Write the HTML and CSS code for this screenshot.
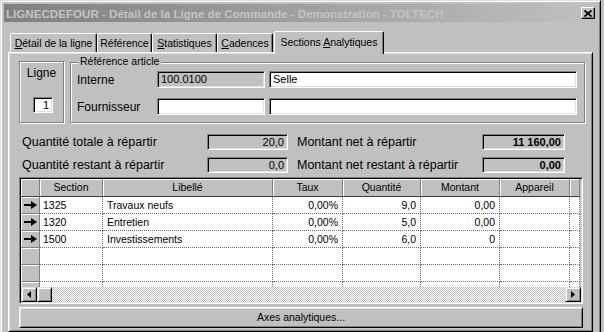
FILE: index.html
```html
<!DOCTYPE html>
<html lang="fr">
<head>
<meta charset="utf-8">
<title>LIGNECDEFOUR</title>
<link rel="stylesheet" href="styles.css">
</head>
<body>
<div class="window">
  <div class="titlebar">
    <span class="title">LIGNECDEFOUR - Détail de la Ligne de Commande - Demonstration - TOLTECH</span>
    <div class="close"><svg width="8" height="7" viewBox="0 0 8 7"><path d="M0.5 0.5 L7.5 6.5 M7.5 0.5 L0.5 6.5" stroke="#000" stroke-width="1.7" fill="none"/></svg></div>
  </div>
  <div class="client">
    <div class="tabs">
      <div class="tab tab-detail"><span><u>D</u>étail de la ligne</span></div>
      <div class="tab tab-ref"><span>Référence</span></div>
      <div class="tab tab-stat"><span><u>S</u>tatistiques</span></div>
      <div class="tab tab-cad"><span><u>C</u>adences</span></div>
      <div class="tab tab-sections is-active"><span>Sections <u>A</u>nalytiques</span></div>
    </div>
    <div class="panel">
      <div class="top-row">
        <div class="ligne-box">
          <div class="ligne-label">Ligne</div>
          <div class="field field-ligne">1</div>
        </div>
        <div class="ref-group">
          <span class="legend">Référence article</span>
          <div class="ref-row">
            <span class="ref-label">Interne</span>
            <div class="field field-ro field-code">100.0100</div>
            <div class="field field-desc">Selle</div>
          </div>
          <div class="ref-row">
            <span class="ref-label">Fournisseur</span>
            <div class="field field-code"></div>
            <div class="field field-desc"></div>
          </div>
        </div>
      </div>

      <div class="qty">
        <div class="qty-row">
          <span class="qty-label">Quantité totale à répartir</span>
          <div class="value">20,0</div>
          <span class="qty-label qty-label-2">Montant net à répartir</span>
          <div class="value value-bold">11 160,00</div>
        </div>
        <div class="qty-row">
          <span class="qty-label">Quantité restant à répartir</span>
          <div class="value">0,0</div>
          <span class="qty-label qty-label-2">Montant net restant à répartir</span>
          <div class="value value-bold">0,00</div>
        </div>
      </div>

      <div class="grid">
        <div class="grid-head">
          <div class="hcell c-ind"></div>
          <div class="hcell c-sec">Section</div>
          <div class="hcell c-lib">Libellé</div>
          <div class="hcell c-taux">Taux</div>
          <div class="hcell c-qte">Quantité</div>
          <div class="hcell c-mnt">Montant</div>
          <div class="hcell c-app">Appareil</div>
          <div class="hcell c-fill"></div>
        </div>
        <div class="grid-body">
          <div class="grid-row">
            <div class="ind c-ind"><svg class="arrow" width="13" height="8" viewBox="0 0 13 8"><path d="M0 3h8v2H0z M7 0l6 4-6 4z"/></svg></div>
            <div class="cell c-sec">1325</div>
            <div class="cell c-lib">Travaux neufs</div>
            <div class="cell c-taux num">0,00%</div>
            <div class="cell c-qte num">9,0</div>
            <div class="cell c-mnt num">0,00</div>
            <div class="cell c-app"></div>
            <div class="cell c-fill"></div>
          </div>
          <div class="grid-row">
            <div class="ind c-ind"><svg class="arrow" width="13" height="8" viewBox="0 0 13 8"><path d="M0 3h8v2H0z M7 0l6 4-6 4z"/></svg></div>
            <div class="cell c-sec">1320</div>
            <div class="cell c-lib">Entretien</div>
            <div class="cell c-taux num">0,00%</div>
            <div class="cell c-qte num">5,0</div>
            <div class="cell c-mnt num">0,00</div>
            <div class="cell c-app"></div>
            <div class="cell c-fill"></div>
          </div>
          <div class="grid-row">
            <div class="ind c-ind"><svg class="arrow" width="13" height="8" viewBox="0 0 13 8"><path d="M0 3h8v2H0z M7 0l6 4-6 4z"/></svg></div>
            <div class="cell c-sec">1500</div>
            <div class="cell c-lib">Investissements</div>
            <div class="cell c-taux num">0,00%</div>
            <div class="cell c-qte num">6,0</div>
            <div class="cell c-mnt num">0</div>
            <div class="cell c-app"></div>
            <div class="cell c-fill"></div>
          </div>
          <div class="grid-row">
            <div class="ind c-ind"></div>
            <div class="cell c-sec"></div><div class="cell c-lib"></div><div class="cell c-taux"></div><div class="cell c-qte"></div><div class="cell c-mnt"></div><div class="cell c-app"></div><div class="cell c-fill"></div>
          </div>
          <div class="grid-row">
            <div class="ind c-ind"></div>
            <div class="cell c-sec"></div><div class="cell c-lib"></div><div class="cell c-taux"></div><div class="cell c-qte"></div><div class="cell c-mnt"></div><div class="cell c-app"></div><div class="cell c-fill"></div>
          </div>
          <div class="grid-row">
            <div class="ind c-ind"></div>
            <div class="cell c-sec"></div><div class="cell c-lib"></div><div class="cell c-taux"></div><div class="cell c-qte"></div><div class="cell c-mnt"></div><div class="cell c-app"></div><div class="cell c-fill"></div>
          </div>
        </div>
        <div class="hscroll">
          <div class="sb-btn"><svg width="4" height="7" viewBox="0 0 4 7"><path d="M4 0v7L0 3.5z"/></svg></div>
          <div class="sb-btn sb-thumb"></div>
          <div class="sb-track"></div>
          <div class="sb-btn"><svg width="4" height="7" viewBox="0 0 4 7"><path d="M0 0v7L4 3.5z"/></svg></div>
        </div>
      </div>

      <div class="button">Axes analytiques...</div>
    </div>
  </div>
</div>
</body>
</html>
```

FILE: styles.css
```css
* { box-sizing: border-box; }
html, body { margin: 0; padding: 0; }
body {
  width: 604px;
  height: 332px;
  overflow: hidden;
  background: #c0c0c0;
  font-family: "Liberation Sans", Arial, sans-serif;
  color: #000;
}

.window {
  width: 601px;
  height: 332px;
  background: #c0c0c0;
  border-left: 1px solid #dfdfdf;
  border-top: 1px solid #dfdfdf;
  border-right: 1px solid #000;
  box-shadow: inset 1px 1px #fff, inset -1px 0 #808080;
  padding: 3px 3px 0 3px;
}

.titlebar {
  height: 18px;
  display: flex;
  align-items: center;
  justify-content: space-between;
  background: linear-gradient(90deg, #808080 0%, #c0c0c0 100%);
  padding: 0 2px 0 2px;
}
.title {
  font-size: 11.6px;
  font-weight: bold;
  color: #c4c4c4;
  white-space: nowrap;
}
.close {
  width: 14px;
  height: 12px;
  background: #c0c0c0;
  border: 1px solid;
  border-color: #fff #000 #000 #fff;
  box-shadow: inset -1px -1px #808080;
  display: flex;
  align-items: center;
  justify-content: center;
}

.client {
  padding: 9px 0 0 4px;
}

.tabs {
  display: flex;
  align-items: flex-end;
  height: 21px;
  padding-left: 2px;
}
.tab {
  height: 19px;
  border: 1px solid;
  border-bottom: 0;
  border-color: #fff #000 transparent #fff;
  border-radius: 2px 2px 0 0;
  box-shadow: inset -1px 0 #808080;
  background: #c0c0c0;
  font-size: 10.5px;
  display: flex;
  align-items: center;
  justify-content: center;
  white-space: nowrap;
}
.tab u { text-decoration-thickness: 1px; text-underline-offset: 1px; }
.tab-detail { width: 87px; }
.tab-ref { width: 55px; }
.tab-stat { width: 65px; }
.tab-cad { width: 56px; }
.tab-sections { width: 110px; }
.tab.is-active {
  height: 23px;
  margin: 0 0 -2px 1px;
  padding-bottom: 2px;
  position: relative;
  z-index: 1;
}

.panel {
  width: 585px;
  height: 280px;
  border: 1px solid;
  border-color: #fff #000 #000 #fff;
  box-shadow: inset 1px 1px #dfdfdf, inset -1px -1px #808080;
  padding: 8px 0 0 10px;
}

.top-row {
  display: flex;
  gap: 6px;
  height: 62px;
}

.ligne-box {
  width: 45px;
  height: 62px;
  border: 1px solid #808080;
  box-shadow: inset 1px 1px #fff, 1px 1px #fff;
}
.ligne-label {
  font-size: 12px;
  line-height: 14px;
  padding-top: 4px;
  text-align: center;
}
.field {
  height: 17px;
  background: #fff;
  border: 1px solid;
  border-color: #808080 #fff #fff #808080;
  box-shadow: inset 1px 1px #000, inset -1px -1px #dfdfdf;
  font-size: 11px;
  line-height: 15px;
  padding: 0 3px;
  white-space: nowrap;
  overflow: hidden;
}
.field-ligne {
  width: 20px;
  height: 16px;
  margin: 17px 0 0 13px;
  text-align: right;
  line-height: 14px;
}
.field-ro { background: #c0c0c0; }

.ref-group {
  position: relative;
  width: 515px;
  height: 61px;
  margin-top: 1px;
  border: 1px solid #808080;
  box-shadow: inset 1px 1px #fff, 1px 1px #fff;
  padding: 8px 7px 0 6px;
}
.legend {
  position: absolute;
  top: -8px;
  left: 7px;
  padding: 0 2px;
  background: #c0c0c0;
  font-size: 10.5px;
  line-height: 13px;
}
.ref-row {
  display: flex;
  align-items: center;
  height: 17px;
}
.ref-row + .ref-row { margin-top: 10px; }
.ref-label {
  width: 80px;
  font-size: 12px;
}
.field-code { width: 108px; }
.field-desc { width: 308px; margin-left: 4px; }

.qty {
  margin-top: 11px;
  display: flex;
  flex-direction: column;
  gap: 7px;
}
.qty-row {
  display: grid;
  grid-template-columns: 188px 81px 194px 83px;
  align-items: center;
  height: 16px;
}
.qty-label {
  font-size: 12.5px;
  padding-left: 3px;
  white-space: nowrap;
}
.qty-label-2 { padding-left: 9px; }
.value {
  height: 16px;
  background: #c0c0c0;
  border: 1px solid;
  border-color: #808080 #fff #fff #808080;
  box-shadow: inset 1px 1px #000, inset -1px -1px #dfdfdf;
  font-size: 11px;
  line-height: 14px;
  text-align: right;
  padding-right: 3px;
}
.value-bold { font-weight: bold; }

.grid {
  margin-top: 4px;
  width: 564px;
  height: 127px;
  border: 1px solid;
  border-color: #808080 #fff #fff #808080;
  box-shadow: inset 1px 1px #000, inset -1px -1px #dfdfdf;
  padding: 1px;
  background: #c0c0c0;
}
.grid-head {
  display: flex;
  height: 18px;
}
.hcell {
  height: 18px;
  background: #c0c0c0;
  border-right: 1px solid #808080;
  border-bottom: 1px solid #404040;
  box-shadow: inset 1px 1px #fff;
  font-size: 10.5px;
  line-height: 17px;
  text-align: center;
  white-space: nowrap;
}
.c-ind { width: 19px; }
.c-sec { width: 63px; }
.c-lib { width: 170px; }
.c-taux { width: 70px; }
.c-qte { width: 78px; }
.c-mnt { width: 79px; }
.c-app { width: 70px; }
.c-fill { width: 10px; }

.grid-body {
  height: 90px;
  overflow: hidden;
}
.grid-row {
  display: flex;
  height: 17px;
}
.cell {
  height: 17px;
  background: #fff;
  border-right: 1px dotted #707070;
  border-bottom: 1px dotted #707070;
  font-size: 10.5px;
  line-height: 16px;
  padding: 0 4px 0 3px;
  white-space: nowrap;
  overflow: hidden;
}
.c-lib.cell { padding-left: 4px; }
.num { text-align: right; }
.ind {
  height: 17px;
  background: #c0c0c0;
  border-right: 1px solid #808080;
  border-bottom: 1px solid #808080;
  box-shadow: inset 1px 1px #fff;
  display: flex;
  align-items: center;
  justify-content: center;
}
.arrow { fill: #000; }

.hscroll {
  display: flex;
  height: 15px;
}
.sb-btn {
  width: 16px;
  height: 15px;
  background: #c0c0c0;
  border: 1px solid;
  border-color: #dfdfdf #000 #000 #dfdfdf;
  box-shadow: inset 1px 1px #fff, inset -1px -1px #808080;
  display: flex;
  align-items: center;
  justify-content: center;
}
.sb-btn svg { fill: #000; }
.sb-thumb { width: 15px; }
.sb-track {
  flex: 1;
  background-color: #fff;
  background-image: repeating-conic-gradient(#c0c0c0 0 25%, #fff 0 50%);
  background-size: 2px 2px;
}

.button {
  margin-top: 3px;
  width: 564px;
  height: 21px;
  border: 1px solid;
  border-color: #fff #000 #000 #fff;
  box-shadow: inset 1px 1px #dfdfdf, inset -1px -1px #808080;
  background: #c0c0c0;
  font-size: 10.5px;
  line-height: 19px;
  text-align: center;
}
```
